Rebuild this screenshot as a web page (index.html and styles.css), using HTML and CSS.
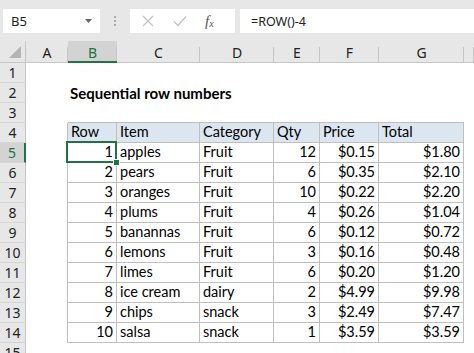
FILE: index.html
```html
<!DOCTYPE html>
<html>
<head>
<meta charset="utf-8">
<link rel="stylesheet" href="styles.css">
</head>
<body>
<div class="app">
  <div class="toolbar">
    <div class="namebox"><span class="name">B5</span><svg class="caret" width="8" height="5" viewBox="0 0 8 5"><path d="M0 0h7L3.5 4z" fill="#666"/></svg></div>
    <div class="grip"><i></i><i></i><i></i></div>
    <div class="fxbox">
      <svg class="ic" width="14" height="14" viewBox="0 0 14 14"><path d="M2 2l10 10M12 2L2 12" stroke="#c3c3c3" stroke-width="1.3" fill="none"/></svg>
      <svg class="ic" width="16" height="14" viewBox="0 0 16 14"><path d="M2 7.5l4 4L14 2.5" stroke="#c3c3c3" stroke-width="1.4" fill="none"/></svg>
      <span class="fx">f<sub>x</sub></span>
    </div>
    <div class="formula">=ROW()-4</div>
  </div>
  <div class="sheet">
    <div class="corner"><svg width="12" height="12" viewBox="0 0 12 12"><path d="M12 0V12H0z" fill="#b4b4b4"/></svg></div>
    <div class="ch">A</div><div class="ch sel">B</div><div class="ch">C</div><div class="ch">D</div><div class="ch">E</div><div class="ch">F</div><div class="ch">G</div><div class="ch last"></div>

    <div class="rh">1</div><div class="c"></div><div class="c"></div><div class="c"></div><div class="c"></div><div class="c"></div><div class="c"></div><div class="c"></div><div class="c"></div>

    <div class="rh">2</div><div class="c"></div><div class="c title">Sequential row numbers</div><div class="c"></div><div class="c"></div><div class="c"></div><div class="c"></div><div class="c"></div><div class="c"></div>

    <div class="rh">3</div><div class="c"></div><div class="c tb"></div><div class="c tb"></div><div class="c tb"></div><div class="c tb"></div><div class="c tb"></div><div class="c tb"></div><div class="c"></div>

    <div class="rh">4</div><div class="c tl"></div><div class="c t th">Row</div><div class="c t th">Item</div><div class="c t th">Category</div><div class="c t th">Qty</div><div class="c t th">Price</div><div class="c t th">Total</div><div class="c"></div>

    <div class="rh sel">5</div><div class="c tl"></div><div class="c t r active">1</div><div class="c t">apples</div><div class="c t">Fruit</div><div class="c t r">12</div><div class="c t r">$0.15</div><div class="c t r">$1.80</div><div class="c"></div>

    <div class="rh">6</div><div class="c tl"></div><div class="c t r">2</div><div class="c t">pears</div><div class="c t">Fruit</div><div class="c t r">6</div><div class="c t r">$0.35</div><div class="c t r">$2.10</div><div class="c"></div>

    <div class="rh">7</div><div class="c tl"></div><div class="c t r">3</div><div class="c t">oranges</div><div class="c t">Fruit</div><div class="c t r">10</div><div class="c t r">$0.22</div><div class="c t r">$2.20</div><div class="c"></div>

    <div class="rh">8</div><div class="c tl"></div><div class="c t r">4</div><div class="c t">plums</div><div class="c t">Fruit</div><div class="c t r">4</div><div class="c t r">$0.26</div><div class="c t r">$1.04</div><div class="c"></div>

    <div class="rh">9</div><div class="c tl"></div><div class="c t r">5</div><div class="c t">banannas</div><div class="c t">Fruit</div><div class="c t r">6</div><div class="c t r">$0.12</div><div class="c t r">$0.72</div><div class="c"></div>

    <div class="rh">10</div><div class="c tl"></div><div class="c t r">6</div><div class="c t">lemons</div><div class="c t">Fruit</div><div class="c t r">3</div><div class="c t r">$0.16</div><div class="c t r">$0.48</div><div class="c"></div>

    <div class="rh">11</div><div class="c tl"></div><div class="c t r">7</div><div class="c t">limes</div><div class="c t">Fruit</div><div class="c t r">6</div><div class="c t r">$0.20</div><div class="c t r">$1.20</div><div class="c"></div>

    <div class="rh">12</div><div class="c tl"></div><div class="c t r">8</div><div class="c t">ice cream</div><div class="c t">dairy</div><div class="c t r">2</div><div class="c t r">$4.99</div><div class="c t r">$9.98</div><div class="c"></div>

    <div class="rh">13</div><div class="c tl"></div><div class="c t r">9</div><div class="c t">chips</div><div class="c t">snack</div><div class="c t r">3</div><div class="c t r">$2.49</div><div class="c t r">$7.47</div><div class="c"></div>

    <div class="rh">14</div><div class="c tl"></div><div class="c t r">10</div><div class="c t">salsa</div><div class="c t">snack</div><div class="c t r">1</div><div class="c t r">$3.59</div><div class="c t r">$3.59</div><div class="c"></div>

    <div class="rh">15</div><div class="c"></div><div class="c"></div><div class="c"></div><div class="c"></div><div class="c"></div><div class="c"></div><div class="c"></div><div class="c"></div>
  </div>
</div>
</body>
</html>
```

FILE: styles.css
```css
* { box-sizing: border-box; }
html, body { margin: 0; padding: 0; background: #fff; }
body { width: 474px; height: 353px; overflow: hidden; }
.app { width: 474px; height: 353px; overflow: hidden; display: flex; flex-direction: column; }

.toolbar {
  height: 41px;
  flex: none;
  background: #e7e7e7;
  display: flex;
  align-items: flex-start;
  padding-top: 9px;
  padding-left: 3px;
}
.namebox {
  width: 97px; height: 24px;
  background: #fff;
  display: flex; align-items: center; justify-content: space-between;
  padding: 0 7px 0 8px;
  font-family: "Noto Sans", "Liberation Sans", sans-serif;
  font-size: 13px; color: #222;
}
.grip { width: 30px; height: 24px; display: flex; flex-direction: column; align-items: center; justify-content: center; gap: 2px; }
.grip i { display: block; width: 2px; height: 2px; background: #a8a8a8; }
.fxbox {
  width: 105px; height: 24px; background: #fff;
  display: flex; align-items: center;
  padding-left: 11px;
}
.fxbox .ic { margin-right: 17px; }
.fx {
  font-family: "Liberation Serif", serif; font-style: italic;
  font-size: 15px; color: #555; line-height: 1;
}
.fx sub { font-size: 10px; vertical-align: -1px; }
.formula {
  margin-left: 5px;
  flex: 1; height: 24px; background: #fff;
  display: flex; align-items: center;
  padding-left: 11px;
  font-family: "Noto Sans", "Liberation Sans", sans-serif;
  font-size: 12.5px; color: #222;
}

.sheet {
  flex: 1;
  display: grid;
  grid-template-columns: 26px 42px 49px 83px 74px 46px 59px 85px 1fr;
  grid-template-rows: 22px repeat(15, 20px);
  font-family: Lato, "Liberation Sans", Arial, sans-serif;
  font-size: 14.5px;
  color: #000;
}
.corner {
  background: #e7e7e7;
  border-right: 1px solid #c6c6c6;
  border-bottom: 1px solid #c6c6c6;
  display: flex; align-items: flex-end; justify-content: flex-end;
  padding: 0 4px 4px 0;
}
.ch {
  position: relative;
  background: #e7e7e7;
  border-bottom: 1px solid #c6c6c6;
  display: flex; align-items: center; justify-content: center;
  font-family: "Noto Sans", "Liberation Sans", sans-serif;
  font-size: 14px; color: #222;
  padding-top: 2px;
}
.ch::after {
  content: ""; position: absolute; right: 0; top: 6px; bottom: 0;
  width: 1px; background: #c6c6c6;
}
.ch.sel {
  background: #d3d3d3; color: #217346;
  border-bottom: 2px solid #217346;
}
.rh {
  background: #e7e7e7;
  border-right: 1px solid #c6c6c6;
  border-bottom: 1px solid #d6d6d6;
  display: flex; align-items: center; justify-content: center;
  font-family: "Noto Sans", "Liberation Sans", sans-serif;
  font-size: 14px; color: #222;
}
.rh.sel { background: #d3d3d3; color: #217346; border-right: 2px solid #217346; }

.c {
  display: flex; align-items: flex-end;
  padding: 0 3px 1px 3px;
  white-space: nowrap;
  line-height: 18px;
}
.title { font-weight: bold; font-size: 15px; overflow: visible; padding-left: 2px; }
.tb { border-bottom: 1px solid #bfbfbf; }
.tl { border-right: 1px solid #bfbfbf; }
.t { border-right: 1px solid #bfbfbf; border-bottom: 1px solid #bfbfbf; }
.th { background: #dce6f1; }
.r { justify-content: flex-end; }
.active { position: relative; }
.active::after {
  content: ""; position: absolute; left: -2px; top: -2px; right: -1px; bottom: -1px;
  border: 2px solid #217346;
}
.active::before {
  content: ""; position: absolute; right: -4px; bottom: -4px;
  width: 5px; height: 5px; background: #217346; border: 1px solid #fff; z-index: 2;
}
```
